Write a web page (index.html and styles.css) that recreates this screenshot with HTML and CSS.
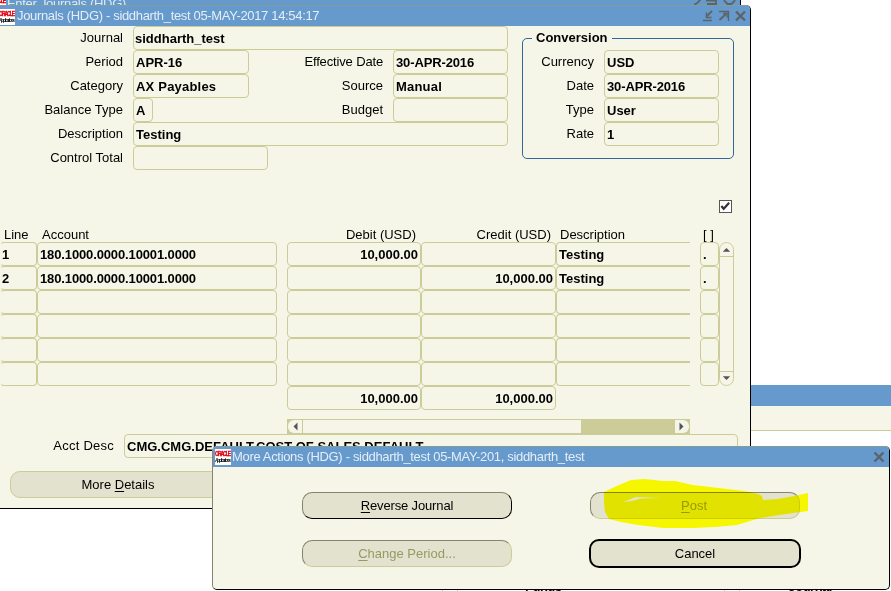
FILE: index.html
```html
<!DOCTYPE html>
<html lang="en">
<head>
<meta charset="utf-8">
<title>Journals (HDG)</title>
<link rel="stylesheet" href="styles.css">
</head>
<body>
<div class="desktop">
  <div class="window back-window">
    <div class="back-title">
      <span class="logo"><b>ORACLE</b><i>Applications</i></span>
      <span class="back-text">Enter Journals (HDG)</span>
      <svg class="back-icons" width="46" height="14" viewBox="0 0 46 14" fill="none" stroke="#5d6468" stroke-width="1.8"><path d="M3 12.500c3 0 5-3 7-6M15 8.500h10M16 12h9V6M33.500 5v4l3 3h4l3-3V5"/></svg>
    </div>
  </div>

  <div class="window side-window"><div class="side-title"></div><div class="side-body"></div></div>

  <div class="window status-strip">
    <span class="strip-mark"></span><span class="strip-text funds">Funds</span>
    <span class="strip-mark second"></span><span class="strip-text journal">Journal</span>
  </div>

  <main class="window journals">
    <header class="titlebar">
      <span class="logo"><b>ORACLE</b><i>Applications</i></span>
      <span class="title t-main">Journals (HDG) - siddharth_test 05-MAY-2017 14:54:17</span>
      <svg class="controls" width="46" height="14" viewBox="0 0 46 14" fill="none" stroke="#5d6468"><path d="M11 2 6 7" stroke-width="1.8"/><path d="M5.500 3.500v5h5M2 11.500h9" stroke-width="1.500"/><path d="M18.500 11 26 4" stroke-width="1.800"/><path d="M18 2.500h10M27.500 2v10M22 4.500h4v4" stroke-width="1.300"/><path d="m35 2.500 9 9m0-9-9 9" stroke-width="2.400"/></svg>
    </header>

    <section class="form">
      <div class="fields">
        <label>Journal</label><span class="field wide s1">siddharth_test</span>
        <label>Period</label><span class="field f115">APR-16</span><label class="l2 tight">Effective Date</label><span class="field dg">30-APR-2016</span>
        <label>Category</label><span class="field f115 loose">AX Payables</span><label class="l2">Source</label><span class="field s2">Manual</span>
        <label>Balance Type</label><span class="field f20">A</span><label class="l2">Budget</label><span class="field"></span>
        <label>Description</label><span class="field wide">Testing</span>
        <label>Control Total</label><span class="field f135"></span>
      </div>
      <fieldset class="conversion">
        <legend>Conversion</legend>
        <label>Currency</label><span class="field">USD</span>
        <label>Date</label><span class="field dg">30-APR-2016</span>
        <label>Type</label><span class="field">User</span>
        <label>Rate</label><span class="field">1</span>
      </fieldset>
    </section>

    <div class="check-row">
      <span class="checkbox"><svg width="12" height="12" viewBox="0 0 12 12"><path d="m1.500 5.500 2.500 3 6-6.500" fill="none" stroke="#333" stroke-width="2.400"/></svg></span>
    </div>

    <section class="lines">
      <div class="grid">
        <span class="head h-line">Line</span><span class="head h-acct">Account</span><span></span><span class="head num">Debit (USD)</span><span class="head num">Credit (USD)</span><span class="head">Description</span><span></span><span class="head h-flex">[ ]</span>

        <span class="cell first">1</span><span class="cell dg">180.1000.0000.10001.0000</span><span></span><span class="cell num">10,000.00</span><span class="cell"></span><span class="cell open">Testing</span><span></span><span class="cell">.</span>
        <span class="cell first">2</span><span class="cell dg">180.1000.0000.10001.0000</span><span></span><span class="cell"></span><span class="cell num">10,000.00</span><span class="cell open">Testing</span><span></span><span class="cell">.</span>
        <span class="cell first"></span><span class="cell"></span><span></span><span class="cell"></span><span class="cell"></span><span class="cell open"></span><span></span><span class="cell"></span>
        <span class="cell first"></span><span class="cell"></span><span></span><span class="cell"></span><span class="cell"></span><span class="cell open"></span><span></span><span class="cell"></span>
        <span class="cell first"></span><span class="cell"></span><span></span><span class="cell"></span><span class="cell"></span><span class="cell open"></span><span></span><span class="cell"></span>
        <span class="cell first"></span><span class="cell"></span><span></span><span class="cell"></span><span class="cell"></span><span class="cell open"></span><span></span><span class="cell"></span>
        <span></span><span></span><span></span><span class="cell num">10,000.00</span><span class="cell num">10,000.00</span>
      </div>
      <div class="vscroll">
        <svg width="13" height="14" viewBox="0 0 13 14"><path d="M2.500 9.500h8l-4-4z" fill="#555"/></svg>
        <svg class="down" width="13" height="14" viewBox="0 0 13 14"><path d="M2.500 4.500h8l-4 4z" fill="#555"/></svg>
      </div>
    </section>

    <div class="hscroll">
      <svg width="14" height="13" viewBox="0 0 14 13"><path d="M9.500 2.500v8l-4-4z" fill="#555"/></svg>
      <span class="track"></span><span class="thumb"></span>
      <svg class="right" width="14" height="13" viewBox="0 0 14 13"><path d="M4.500 2.500v8l4-4z" fill="#555"/></svg>
    </div>

    <div class="acct"><label>Acct Desc</label><span class="field">CMG.CMG.DEFAULT.COST OF SALES.DEFAULT</span></div>
    <button class="btn details">More <u>D</u>etails</button>
  </main>

  <aside class="window dialog">
    <header class="titlebar">
      <span class="logo"><b>ORACLE</b><i>Applications</i></span>
      <span class="title t-dialog">More Actions (HDG) - siddharth_test 05-MAY-201, siddharth_test</span>
      <svg class="controls" width="14" height="14" viewBox="0 0 14 14"><path d="m2.500 2.500 9 9m0-9-9 9" fill="none" stroke="#5d6468" stroke-width="2.400"/></svg>
    </header>
    <div class="actions">
      <button class="btn active"><u>R</u>everse Journal</button>
      <button class="btn disabled post"><u>P</u>ost</button>
      <button class="btn disabled"><u>C</u>hange Period...</button>
      <button class="btn default">Cancel</button>
    </div>
    <svg class="marker" width="206" height="52" viewBox="0 0 206 52"><path fill="#ff0" fill-rule="evenodd" d="M1 14 16 7 28 2 42 1 60 3 72 3 90 7 116 10 141 13 155 16 159 18 160 22 175 21 191 18 205 15V33L190 35 170 38 157 40 134 47 112 49 90 50 60 50 35 47 18 44 6 41 2 34 1 24ZM20 24 33 19 58 20 38 20.500 29 23Z"/></svg>
  </aside>
</div>
</body>
</html>
```

FILE: styles.css
```css
* { box-sizing: border-box; }

body {
  margin: 0;
  background: #fff;
  color: #000;
  font: 13px/24px "Liberation Sans", Arial, sans-serif;
}

.desktop {
  position: relative;
  width: 891px;
  height: 591px;
  overflow: hidden;
}

.window { position: absolute; overflow: hidden; }

/* Windows lying behind the main form */
.back-window {
  left: 0;
  top: 0;
  width: 741px;
  height: 6px;
  border-right: 1px solid #000;
  background: #6699cc;
}
.back-title { display: flex; height: 16px; margin-top: -4px; color: #dbe9f5; }
.back-title .logo { margin-left: -10px; }
.back-text { margin-left: 1px; line-height: 16px; letter-spacing: -.3px; }
.back-icons { margin: -4px 3px 0 auto; }

.side-window { left: 751px; top: 385px; width: 140px; height: 46px; }
.side-title { height: 21px; background: #6699cc; }
.side-body { height: 25px; background: #f6f6e8; border-bottom: 1px solid #cccc99; }

.status-strip {
  left: 440px;
  top: 576px;
  width: 451px;
  height: 15px;
  display: flex;
  font-weight: bold;
}
.strip-mark { flex: none; width: 16px; margin-left: 2px; border: solid #cccc99; border-width: 0 1px; }
.strip-mark.second { margin-left: 162px; }
.strip-text { line-height: 22px; letter-spacing: -.5px; }
.funds { margin-left: 67px; }
.journal { margin-left: 49px; }

/* Shared pieces */
.titlebar {
  display: flex;
  align-items: flex-start;
  height: 21px;
  border-top: 1px solid #829c99;
  background: #6699cc;
  color: #e4eef6;
}
.title { line-height: 20px; letter-spacing: -.33px; white-space: nowrap; }
.controls { margin-left: auto; }
.logo {
  flex: none;
  width: 16px;
  height: 16px;
  overflow: hidden;
  background: #fff;
  line-height: 8px;
}
.logo b, .logo i { display: block; height: 8px; font-size: 5px; white-space: nowrap; transform: scaleY(1.3); }
.logo b { color: #e00010; -webkit-text-stroke: .3px #e00010; letter-spacing: -1px; }
.logo i { color: #000; font-size: 4.500px; font-weight: bold; letter-spacing: -1px; }

.field, .cell {
  height: 24px;
  padding-left: 2px;
  border: 1px solid #cccc99;
  border-radius: 4px;
  font-weight: bold;
  line-height: 23px;
  white-space: nowrap;
}
.dg { letter-spacing: -.13px; }
.s1 { padding-left: 1px; }
.s2 { letter-spacing: .2px; }
.loose { letter-spacing: .2px; }
.tight { letter-spacing: -.15px; }

.btn {
  height: 27px;
  padding: 0;
  border: 1px solid #cccc99;
  border-radius: 10px;
  background: #e2e2cf;
  color: #000;
  font: 13px/25px "Liberation Sans", Arial, sans-serif;
}
.btn u { text-underline-offset: 2px; }

/* Main form */
.journals {
  left: 0;
  top: 5px;
  width: 751px;
  height: 504px;
  border-right: 1px solid #000;
  border-bottom: 1px solid #000;
  border-radius: 0 5px 3px 0;
  background: #f6f6e8;
}
.journals .logo { margin: 3px 0 0 -1px; }
.journals .title { margin-left: 2px; }
.journals .controls { margin: 3px 3px 0 auto; }

.form { display: flex; }
.fields {
  display: grid;
  grid-template-columns: 123px 10px 116px 134px 10px 115px;
  grid-auto-rows: 24px;
  width: 508px;
  height: 144px;
}
.fields label { grid-column: 1; text-align: right; }
.fields label.l2 { grid-column: 4; }
.fields .field { grid-column: 6; }
.fields .f115, .fields .f20 { grid-column: 3; }
.fields .f20 { width: 20px; }
.fields .wide { grid-column: 3 / 7; }
.fields .f135 { grid-column: 3 / 5; width: 135px; }

.conversion {
  display: grid;
  grid-template-columns: 71px 115px;
  grid-auto-rows: 24px;
  column-gap: 10px;
  width: 212px;
  height: 133px;
  margin: 0 0 0 14px;
  padding: 0;
  border: 1px solid #336699;
  border-radius: 5px;
}
.conversion label { text-align: right; }
.conversion legend { margin-left: 9px; padding: 0 4px; font-weight: bold; }

.check-row { display: flex; justify-content: flex-end; height: 56px; padding: 30px 18px 0 0; }
.checkbox { width: 13px; height: 13px; border: 1px solid #555; background: #fff; }
.checkbox svg { display: block; width: 11px; height: 11px; }

.lines { display: flex; height: 184px; }
.grid {
  display: grid;
  grid-template-columns: 37px 240px 10px 134px 135px 134px 10px 19px;
  grid-template-rows: 16px repeat(7, 24px);
}
.head { padding-left: 4px; line-height: 17px; }
.h-line { padding-left: 4px; }
.h-acct { padding-left: 5px; }
.h-flex { padding-left: 3px; }
.num { text-align: right; padding-right: 2px; }
.head.num { padding-right: 5px; }
.cell.first { border-left-color: transparent; padding-left: 1px; }
.cell.open { border-right: 0; border-radius: 4px 0 0 4px; }

.vscroll {
  display: flex;
  flex-direction: column;
  justify-content: space-between;
  width: 15px;
  height: 144px;
  margin-top: 16px;
  border: 1px solid #cccc99;
  border-radius: 8px;
}
.vscroll svg { display: block; border-bottom: 1px solid #cccc99; }
.vscroll .down { border: 0; border-top: 1px solid #cccc99; }

.hscroll {
  display: flex;
  width: 403px;
  height: 15px;
  margin: 9px 0 0 287px;
  border: 1px solid #cccc99;
  background: #cccc99;
}
.hscroll svg { flex: none; background: #f6f6e8; border-radius: 6px 0 0 6px; }
.hscroll .right { border-radius: 0 6px 6px 0; }
.track { width: 279px; border-left: 1px solid #cccc99; background: #f6f6e8; }
.thumb { width: 94px; background: #cccc99; }

.acct { display: flex; }
.acct label { width: 114px; margin-right: 10px; text-align: right; letter-spacing: .25px; }
.acct .field { width: 614px; }
.details { display: block; width: 216px; margin: 13px 0 0 10px; }

/* Dialog */
.dialog {
  left: 212px;
  top: 446px;
  width: 678px;
  height: 144px;
  border: 1px solid #000;
  border-left-color: #848470;
  border-top: 0;
  border-radius: 5px;
  background: #f6f6e8;
}
.dialog .logo { margin: 2px 0 0 2px; }
.dialog .title { margin-left: 1px; }
.dialog .controls { margin: 3px 3px 0 auto; }
.actions {
  display: grid;
  grid-template-columns: 210px 210px;
  grid-auto-rows: 27px;
  gap: 21px 78px;
  margin: 25px 0 0 89px;
}
.btn.active { border-color: #848470 #000 #000 #848470; letter-spacing: -.15px; }
.btn.disabled { border-color: #848470 #cccc99 #cccc99 #848470; color: #999966; }
.btn.post { padding-right: 2px; }
.btn.default { width: 212px; height: 29px; margin: -1px; border: 2px solid #000; border-radius: 10px; }

/* Highlighter stroke drawn over the Post button */
.marker { position: absolute; left: 390px; top: 32px; mix-blend-mode: multiply; }
```
